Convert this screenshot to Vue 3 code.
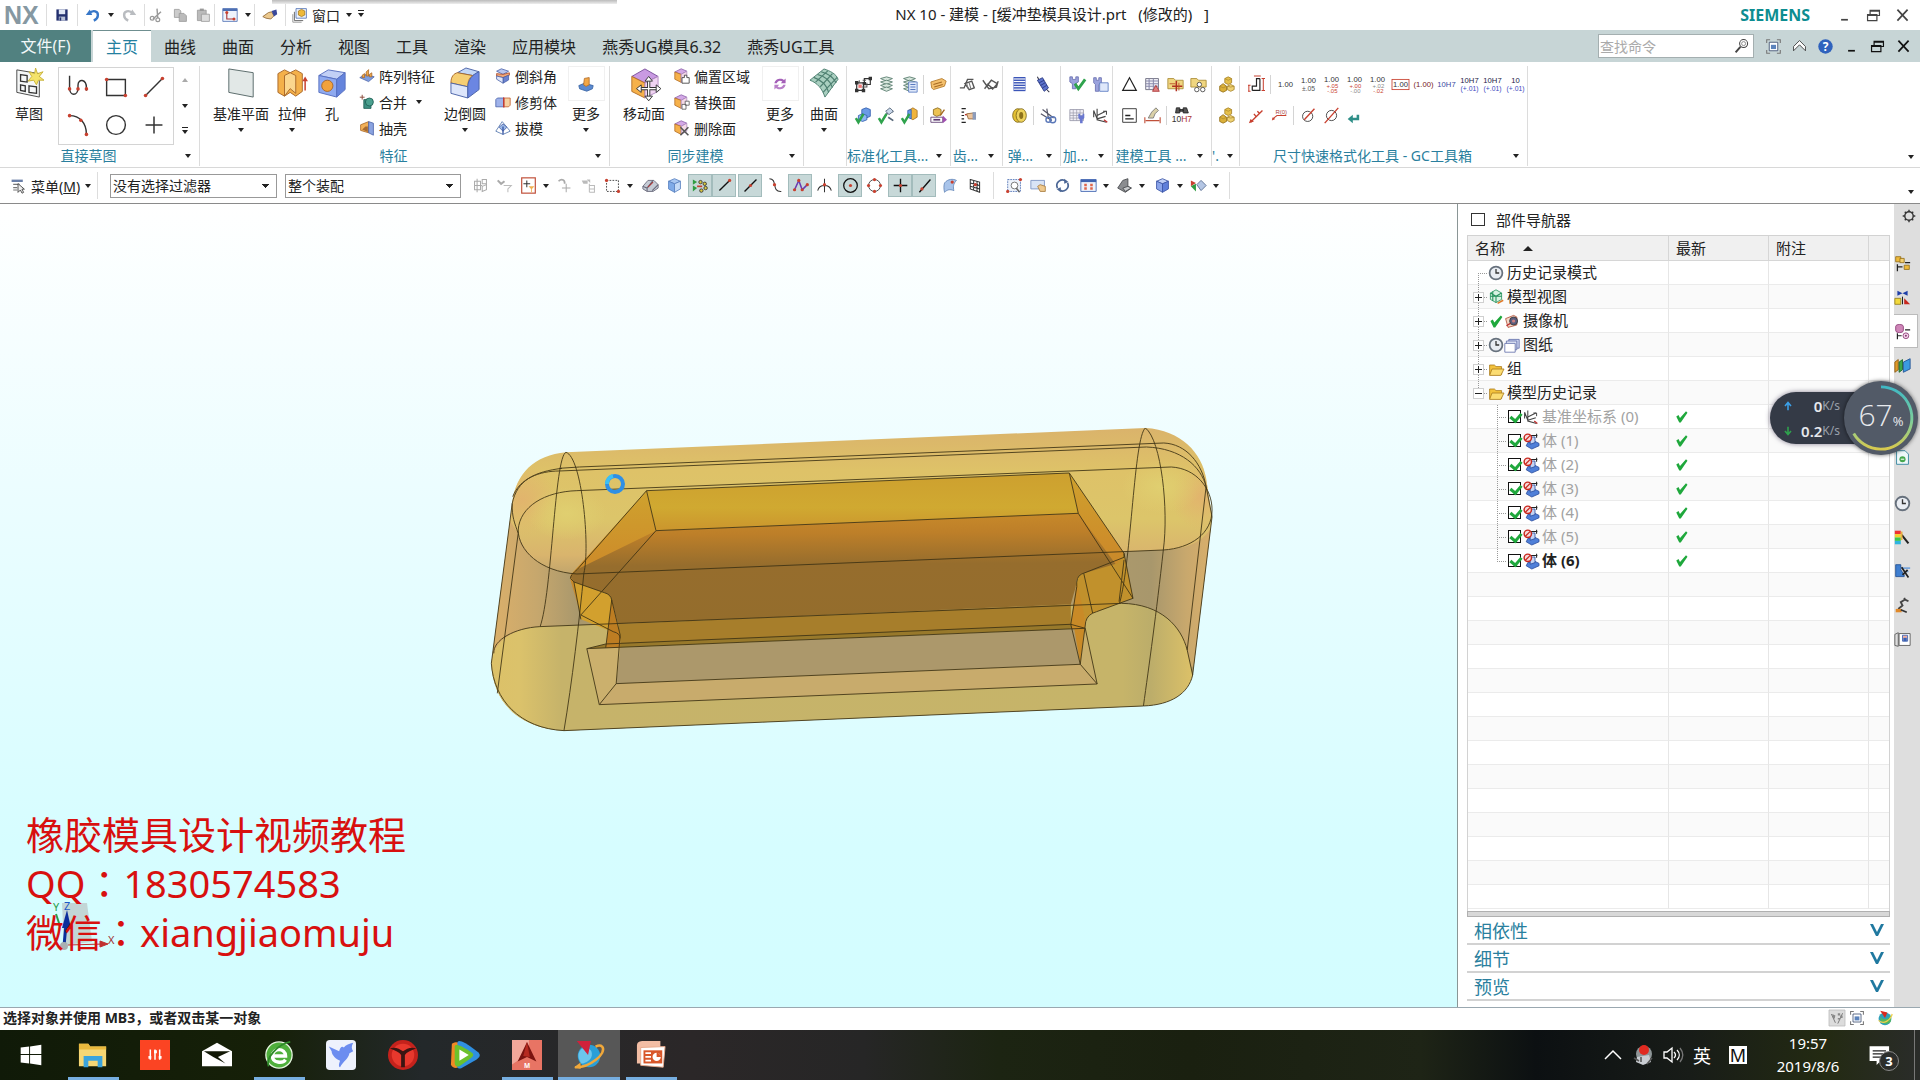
<template>
  <div class="app">
    <!-- 标题栏 -->
    <header class="title-bar">
      <div class="top-shade"></div>
      <div class="quick">
        <span class="nx-logo">NX</span>
        <i class="q-sep"></i>
        <button class="q-btn" aria-label="保存"><Icon name="save" /></button>
        <i class="q-sep"></i>
        <button class="q-btn" aria-label="撤消"><Icon name="undo" /></button>
        <i class="caret"></i>
        <button class="q-btn" aria-label="重做"><Icon name="redo" /></button>
        <i class="q-sep"></i>
        <button class="q-btn tight" aria-label="剪切"><Icon name="cut" /></button>
        <button class="q-btn tight" aria-label="复制"><Icon name="copy" /></button>
        <button class="q-btn tight" aria-label="粘贴"><Icon name="paste" /></button>
        <i class="q-sep"></i>
        <button class="q-btn" aria-label="视图窗口"><Icon name="wcs" /></button>
        <i class="caret"></i>
        <i class="q-sep gap"></i>
        <button class="q-btn" aria-label="触控"><Icon name="hand" /></button>
        <i class="q-sep"></i>
        <button class="q-win"><Icon name="window" /><span>窗口</span></button>
        <i class="caret"></i>
        <i class="caret lined"></i>
      </div>
      <div class="title-text">NX 10 - 建模 - [缓冲垫模具设计.prt&nbsp;&nbsp; (修改的)&nbsp;&nbsp; ]</div>
      <div class="title-right">
        <span class="siemens">SIEMENS</span>
        <button v-for="n in ['min', 'restore', 'close']" :key="n" class="win-btn" :aria-label="n"><Icon :name="n" /></button>
      </div>
    </header>

    <!-- 选项卡 -->
    <nav class="tab-bar">
      <button class="file-tab">文件(F)</button>
      <button v-for="(t, i) in tabs" :key="t" class="tab" :class="{ active: i === 0 }">{{ t }}</button>
      <div class="tab-right">
        <label class="search">
          <input type="text" placeholder="查找命令" aria-label="查找命令" />
          <Icon name="search" />
        </label>
        <button class="tb-btn" aria-label="全屏"><Icon name="full" /></button>
        <button class="tb-btn" aria-label="最小化功能区"><Icon name="collapse" /></button>
        <button class="tb-btn" aria-label="帮助"><Icon name="help" /></button>
        <button v-for="n in ['min', 'restore', 'close']" :key="n" class="tb-btn dark" :aria-label="n"><Icon :name="n" /></button>
      </div>
    </nav>

    <!-- 功能区 -->
    <section class="ribbon">
      <div class="group g-sketch">
        <div class="group-body">
          <button class="big w-sketch"><Icon name="sketch" big /><span>草图</span></button>
          <div class="gallery">
            <button v-for="n in gallery" :key="n" :aria-label="n"><Icon :name="n" big /></button>
          </div>
          <div class="gallery-nav"><i class="caret up"></i><i class="caret"></i><i class="caret lined"></i></div>
        </div>
        <div class="group-foot"><span>直接草图</span><i class="caret"></i></div>
      </div>

      <div class="group g-feature">
        <div class="group-body">
          <button class="big w-plane"><Icon name="plane" big /><span>基准平面</span><i class="caret"></i></button>
          <button class="big"><Icon name="extrude" big /><span>拉伸</span><i class="caret"></i></button>
          <button class="big"><Icon name="hole" big /><span>孔</span></button>
          <div class="list w-list1">
            <button><Icon name="pattern" /><span>阵列特征</span></button>
            <button><Icon name="unite" /><span>合并</span><i class="caret"></i></button>
            <button><Icon name="shell" /><span>抽壳</span></button>
          </div>
          <button class="big w-blend"><Icon name="blend" big /><span>边倒圆</span><i class="caret"></i></button>
          <div class="list w-list2">
            <button><Icon name="chamfer" /><span>倒斜角</span></button>
            <button><Icon name="trim" /><span>修剪体</span></button>
            <button><Icon name="draft" /><span>拔模</span></button>
          </div>
          <button class="big more"><span class="more-box"><Icon name="pad" /></span><span>更多</span><i class="caret"></i></button>
        </div>
        <div class="group-foot"><span>特征</span><i class="caret"></i></div>
      </div>

      <div class="group g-sync">
        <div class="group-body">
          <button class="big w-blend"><Icon name="moveface" big /><span>移动面</span></button>
          <div class="list w-list3">
            <button><Icon name="offset" /><span>偏置区域</span></button>
            <button><Icon name="replace" /><span>替换面</span></button>
            <button><Icon name="delface" /><span>删除面</span></button>
          </div>
          <button class="big more"><span class="more-box"><Icon name="cycle" /></span><span>更多</span><i class="caret"></i></button>
        </div>
        <div class="group-foot"><span>同步建模</span><i class="caret"></i></div>
      </div>

      <div class="group g-surface">
        <div class="group-body">
          <button class="big"><Icon name="surface" big /><span>曲面</span><i class="caret"></i></button>
        </div>
      </div>

      <div v-for="g in gcGroups" :key="g.label" class="group" :class="g.cls">
        <div class="group-body gc">
          <div v-for="(row, r) in g.rows" :key="r" class="gc-row">
            <template v-for="(n, i) in row" :key="i">
              <i v-if="n === '|'" class="gc-sep"></i>
              <button v-else :aria-label="n"><Icon :name="n" /></button>
            </template>
          </div>
        </div>
        <div class="group-foot"><span>{{ g.label }}</span><i class="caret"></i></div>
      </div>
      <div class="ribbon-end"><i class="caret"></i></div>
    </section>

    <!-- 选择条 -->
    <section class="select-bar">
      <button class="menu-btn"><Icon name="menu" /><span>菜单(<u>M</u>)</span><i class="caret"></i></button>
      <i class="bar-sep"></i>
      <select class="combo c1" aria-label="类型过滤器"><option>没有选择过滤器</option></select>
      <select class="combo c2" aria-label="选择范围"><option>整个装配</option></select>
      <div class="bar-icons">
        <template v-for="(n, i) in barIcons" :key="i">
          <i v-if="n === '|'" class="bar-sep wide"></i>
          <i v-else-if="n === ' '" class="bar-gap"></i>
          <i v-else-if="n === 'v'" class="caret"></i>
          <button v-else :class="{ on: n.endsWith('*') }" :aria-label="n"><Icon :name="n.replace('*', '')" /></button>
        </template>
      </div>
      <i class="caret bar-end"></i>
    </section>

    <!-- 工作区 -->
    <main class="work">
      <div class="viewport">
        <svg class="scene" viewBox="0 0 1457 803" preserveAspectRatio="xMinYMin meet">
          <defs>
            <linearGradient id="body" x1="0" y1="0" x2="0" y2="1">
              <stop offset="0" stop-color="#dab36b" /><stop offset=".14" stop-color="#dec268" />
              <stop offset=".3" stop-color="#dcc56a" /><stop offset=".42" stop-color="#d9b46d" />
              <stop offset=".52" stop-color="#b39c6c" /><stop offset="1" stop-color="#ad9a6b" />
            </linearGradient>
            <linearGradient id="endL" x1="0" y1="0" x2="1" y2="0">
              <stop offset="0" stop-color="#dcb06a" /><stop offset=".4" stop-color="#c6a76d" /><stop offset=".75" stop-color="#a8976c" /><stop offset="1" stop-color="#ab996c" />
            </linearGradient>
            <linearGradient id="endR" x1="1" y1="0" x2="0" y2="0">
              <stop offset="0" stop-color="#dcb06a" /><stop offset=".3" stop-color="#c8a86d" /><stop offset=".65" stop-color="#a8976c" /><stop offset="1" stop-color="#ab996c" />
            </linearGradient>
            <linearGradient id="bottom" x1="0" y1="0" x2="1" y2="0">
              <stop offset="0" stop-color="#dcc168" /><stop offset=".04" stop-color="#dbc26b" /><stop offset=".1" stop-color="#c6b36a" />
              <stop offset=".9" stop-color="#c6b469" /><stop offset=".94" stop-color="#bcad6a" /><stop offset="1" stop-color="#dcc168" />
            </linearGradient>
            <linearGradient id="top" x1="0" y1="0" x2="0" y2="1">
              <stop offset="0" stop-color="#cda02f" /><stop offset=".6" stop-color="#d0a931" /><stop offset="1" stop-color="#cb952d" />
            </linearGradient>
            <linearGradient id="mid" x1="0" y1="0" x2="0.04" y2="1">
              <stop offset="0" stop-color="#c98b2a" /><stop offset=".2" stop-color="#bd7f29" /><stop offset=".48" stop-color="#966d2d" /><stop offset="1" stop-color="#946d2c" />
            </linearGradient>
            <linearGradient id="orange" x1="0" y1="0" x2="0" y2="1">
              <stop offset="0" stop-color="#cfa22e" /><stop offset=".55" stop-color="#cd8d2a" /><stop offset="1" stop-color="#c0842a" />
            </linearGradient>
            <radialGradient id="hot"><stop offset="0" stop-color="#e3b06e" stop-opacity=".8" /><stop offset="1" stop-color="#e3b06e" stop-opacity="0" /></radialGradient>
            <radialGradient id="lemon"><stop offset="0" stop-color="#e0cf70" /><stop offset="1" stop-color="#e0cf70" stop-opacity="0" /></radialGradient>
            <clipPath id="outer"><path :d="outline" /></clipPath>
          </defs>
          <g transform="translate(460 196) scale(.4974 .3333)">
            <path :d="outline" fill="url(#body)" />
            <g clip-path="url(#outer)">
              <path d="M90 340L117 400C130 470 170 515 235 522H300V760H60Z" fill="url(#endL)" />
              <path d="M1520 350C1505 420 1470 445 1414 450L1320 455V800H1520Z" fill="url(#endR)" />
              <ellipse cx="125" cy="300" rx="70" ry="110" fill="url(#hot)" />
              <ellipse cx="215" cy="340" rx="80" ry="80" fill="url(#lemon)" />
              <ellipse cx="1490" cy="290" rx="60" ry="100" fill="url(#hot)" />
              <ellipse cx="1410" cy="260" rx="80" ry="80" fill="url(#lemon)" />
            </g>
            <path d="M160 680L1330 610C1410 612 1450 680 1462 750L1473 825C1462 890 1420 915 1374 918L209 992C120 985 66 910 63 790C66 720 110 684 160 680Z" fill="url(#bottom)" />
            <path d="M375 272L1225 219L1243 340L394 392Z" fill="url(#top)" />
            <path d="M375 272L394 392L243 645L222 540V525Z" fill="url(#orange)" />
            <path d="M1225 219L1335 460L1353 595L1243 340Z" fill="url(#orange)" />
            <path d="M394 392L1243 340L1322 500L1250 522Q1238 530 1238 560L1228 613L318 672L305 600Q302 585 290 578L229 546L222 530L236 508Z" fill="url(#mid)" />
            <path d="M318 672L1228 613L1228 675L323 735Z" fill="#a77e2b" />
            <path d="M255 746L293 732L1228 673L1257 685Z" fill="#98792b" />
            <path d="M229 546L290 578Q303 583 305 600L322 705L243 658Z" fill="#d2a02e" />
            <path d="M305 600L322 705V743H293Z" fill="#bd7d22" />
            <path d="M1322 490L1335 460L1353 595L1280 635Q1262 642 1258 665L1238 560Q1240 530 1250 522Z" fill="#c1912c" />
            <path d="M1240 545L1258 665L1247 793L1228 673Z" fill="#c98a27" />
            <path d="M322 743L1235 687L1247 793L314 851Z" fill="#ac986b" />
            <path d="M255 746L322 743L314 851L280 914Z" fill="#cbb06d" />
            <path d="M314 851L1247 793L1281 852L280 914Z" fill="#c8ab6c" />
            <path d="M1257 685L1281 852L1247 793Z" fill="#c7ae6b" />
            <g class="edges">
              <path d="M213 157C190 170 185 580 161 680M213 157C245 170 262 440 249 520C240 660 225 850 209 992" />
              <path d="M1378 84C1355 110 1350 480 1326 610M1378 84C1410 120 1425 330 1414 450C1400 640 1385 800 1374 918" />
              <path d="M200 205L240 201L1415 129C1460 132 1492 190 1500 260L1512 350L1473 825M200 213L1380 141C1450 145 1490 200 1500 260" />
              <path d="M105 310C115 240 150 215 205 205M106 290C120 235 160 213 200 213" />
              <path d="M235 272L1430 201C1480 205 1512 265 1512 330C1512 400 1470 445 1414 450L235 522C160 515 117 450 117 390C120 320 170 275 235 272Z" />
              <path d="M105 310L63 790C68 900 120 985 209 992L1374 918C1430 915 1465 880 1473 825M105 310C104 350 110 370 117 400L75 880M1500 260L1462 750" />
              <path d="M160 680L1330 610C1410 612 1450 680 1462 750L1473 825M160 680C110 684 66 720 68 760" />
              <path d="M375 272L394 392L1243 340L1225 219L1335 460L1353 595L1280 635Q1262 642 1258 665L1247 793L1281 852L280 914L255 746L293 732L1228 673L1257 685L255 746M375 272L236 508Q222 525 222 535L229 546L290 578Q303 583 305 600L322 705L314 851L280 914M394 392L243 645L308 695Q322 700 322 715" />
              <path d="M375 272L1225 219M1335 460V472L1250 522Q1238 530 1240 560L1228 673L1247 793L314 851M1243 340L1353 595M1257 685L1281 852M229 546L243 658M305 600L293 743M1254 520L1272 640M1335 480L1325 605" />
            </g>
          </g>
          <circle cx="615" cy="280" r="8" fill="none" stroke="#2f8fe4" stroke-width="4" />
          <path d="M607 280A8 8 0 0 1 613 272" fill="none" stroke="#3cc0f4" stroke-width="4" />
          <!-- 坐标轴 -->
          <g>
            <path d="M62 699H87L92 738L64 741Z" fill="#b9c4c4" opacity=".7" />
            <path d="M68 741L104 740M100 737L108 740L100 743Z" stroke="#c03030" fill="#c03030" />
            <path d="M64 742L66 720" stroke="#0b2f9c" stroke-width="3" /><path d="M62 724L67 706L71 724Z" fill="#0b2f9c" />
            <path d="M60 722L56 710" stroke="#2b9c4a" stroke-width="2" />
            <circle cx="64" cy="742" r="4" fill="#a9b0b2" />
            <text x="53" y="707" fill="#2b9c4a">Y</text><text x="64" y="706" fill="#1d59c8">Z</text><text x="108" y="740" fill="#a03030">X</text>
          </g>
        </svg>
        <div class="watermark">
          <div>橡胶模具设计视频教程</div>
          <div>QQ<span class="colon">：</span>1830574583</div>
          <div>微信<span class="colon">：</span>xiangjiaomuju</div>
        </div>
      </div>

      <aside class="navigator">
        <h2 class="nav-title"><i class="nav-box"></i>部件导航器</h2>
        <div class="tree-wrap">
          <table class="tree">
            <colgroup><col class="col-name" /><col class="col-mid" /><col class="col-mid" /><col /></colgroup>
            <thead>
              <tr><th>名称<i class="caret up sort"></i></th><th>最新</th><th>附注</th><th></th></tr>
            </thead>
            <tbody>
              <tr v-for="(row, i) in treeRows" :key="i">
                <td>
                  <div v-if="row.text" class="node" :class="{ child: row.child, dim: row.dim, bold: row.bold }">
                    <svg class="branch" width="16" height="24" viewBox="0 0 16 24">
                      <path :d="branchPath(row)" stroke="#999" stroke-dasharray="1 1" fill="none" />
                      <template v-if="row.box">
                        <rect x="1.5" y="7.5" width="10" height="10" fill="#fff" stroke="#d0d0d0" />
                        <path :d="row.box === '+' ? 'M3 12.5H10M6.5 9V16' : 'M3 12.5H10'" stroke="#222" />
                      </template>
                    </svg>
                    <input v-if="row.child" type="checkbox" checked :aria-label="row.text" />
                    <Icon v-for="n in row.icons" :key="n" :name="n" />
                    <span>{{ row.text }}</span>
                  </div>
                </td>
                <td><Icon v-if="row.child" name="tick" class="tick" /></td>
                <td></td>
                <td></td>
              </tr>
            </tbody>
          </table>
          <div class="splitter"></div>
        </div>
        <button v-for="s in sections" :key="s" class="section-bar">
          <span>{{ s }}</span>
          <svg width="16" height="14" viewBox="0 0 16 14"><path d="M1 1H4L8 9L12 1H15L9 13H7Z" fill="#2079a0" /></svg>
        </button>
      </aside>

      <div class="resource-bar">
        <button class="gear" aria-label="设置"><Icon name="gear" /></button>
        <button v-for="r in resources" :key="r" :class="[r, { active: r === 'partnav' }]" :aria-label="r"><Icon :name="r" /></button>
      </div>

      <!-- 网速悬浮窗 -->
      <div class="speed">
        <div class="speed-pill">
          <div><Icon name="up" /><b>0</b><small>K/s</small></div>
          <div><Icon name="down" /><b>0.2</b><small>K/s</small></div>
        </div>
        <div class="speed-ball">
          <svg viewBox="0 0 76 76">
            <defs><linearGradient id="arc" x1="0" y1="0" x2="0" y2="1"><stop offset="0" stop-color="#3fb8c4" /><stop offset=".55" stop-color="#7fcf9a" /><stop offset="1" stop-color="#d8c94e" /></linearGradient></defs>
            <path d="M38 6A32 32 0 1 1 10 54" fill="none" stroke="url(#arc)" stroke-width="3" />
          </svg>
          <span class="pct">67<small>%</small></span>
        </div>
      </div>
    </main>

    <footer class="status">
      <span>选择对象并使用 MB3，或者双击某一对象</span>
      <div class="status-icons"><Icon name="flag" /><Icon name="full" /><Icon name="nxball" /></div>
    </footer>

    <!-- 任务栏 -->
    <div class="taskbar">
      <button v-for="t in tasks" :key="t.icon" class="task" :class="t.state" :aria-label="t.icon"><Icon :name="t.icon" big /></button>
      <div class="tray">
        <Icon name="chev" /><Icon name="qq" /><Icon name="volume" />
        <span class="ime">英</span>
        <span class="ime-m">M</span>
        <div class="clock"><span>19:57</span><span>2019/8/6</span></div>
        <div class="notice"><Icon name="note" big /><span>3</span></div>
        <i class="desk"></i>
      </div>
    </div>
  </div>
</template>

<script setup>
import { h } from 'vue';

const R = '#c8402f';
const dot = (x, y) => `<circle cx="${x}" cy="${y}" r="1.9" fill="${R}"/>`;
const ln = (d, c = '#333', w = 1.2) => `<path d="${d}" fill="none" stroke="${c}" stroke-width="${w}"/>`;
const fl = (d, c, s = 'none') => `<path d="${d}" fill="${c}" stroke="${s}"/>`;
const tx = (t, x, y, s, c = '#333') => `<text x="${x}" y="${y}" font-size="${s}" fill="${c}" text-anchor="middle" font-family="Liberation Sans, sans-serif">${t}</text>`;
const cube = (a, b, c, s) => fl('M10 2L17 5L10 8L3 5Z', a, s) + fl('M3 5L10 8V18L3 14Z', b, s) + fl('M17 5L10 8V18L17 14Z', c, s);
const smallCube = fl('M1 5L9 1L16 4L9 8Z', '#d3a8e6', '#8a5fa8') + fl('M1 5L9 8V18L1 14Z', '#f6b14a', '#b4702a') + fl('M16 4L9 8V18L16 14Z', '#f3d9e6', '#b08ac0');
const cubes = fl('M8 3L12 1L16 3V8L12 10L8 8Z', '#e6c04a', '#a8842a') + fl('M2 12L6 9L10 12V17L6 19L2 17Z', '#dbb038', '#96731e') + fl('M11 12L15 10L19 12V16L15 18L11 16Z', '#efd272', '#a8842a') + ln('M8 3L12 5L16 3M2 12L6 14L10 12M11 12L15 13L19 12', '#a8842a', 0.8);
const stack = [3, 7, 11, 15].map((y) => fl(`M3 ${y}L10 ${y - 2}L17 ${y}L10 ${y + 3}Z`, '#d7e6dd', '#557a6c')).join('');
const block = fl('M8 3L13 1L18 3V11L13 13L8 11Z', '#6b9be6', '#3460b0') + fl('M4 10L9 8L14 10V15L9 17L4 15Z', '#8db8f2', '#3460b0');
const greenTick = (x, y) => `<path d="M${x} ${y}L${x + 3} ${y + 5}L${x + 9} ${y - 5}" fill="none" stroke="#2fa34d" stroke-width="3"/>`;
const dim = (sub, c1, c2) => tx('1.00', 10, 7, 9) + tx('+.' + sub, 11, 14, 7, c1) + tx('-.' + sub, 11, 20, 7, c2);
const fit = (t, s) => tx(t, 10, 8, 9, '#224') + tx(s, 10, 18, 8, '#3a49c0');
const clock = '<circle cx="10" cy="10" r="8" fill="#e9edf3" stroke="#67717d" stroke-width="2.2"/>' + ln('M10 5V10H14', '#333', 1.6);

const icons = {
  save: fl('M3 3H17V17H3Z', '#23306f') + fl('M6 3H14V9H6Z', '#dfe6f5') + fl('M6 12H14V17H6Z', '#b9c2d8') + fl('M7 13H9V17H7Z', '#23306f'),
  undo: ln('M5 8C10 3 17 5 16 11C16 14 13 16 11 17', '#3777c8', 3) + fl('M1 10L6 3L9 10Z', '#3777c8'),
  redo: ln('M15 8C10 3 3 5 4 11C4 14 7 16 9 17', '#b9bcc0', 3) + fl('M19 10L14 3L11 10Z', '#b9bcc0'),
  cut: ln('M5 15L15 6M10 2L11 14', '#999', 1.8) + '<circle cx="4" cy="14" r="2.4" fill="none" stroke="#999" stroke-width="1.5"/><circle cx="11" cy="16" r="2.4" fill="none" stroke="#999" stroke-width="1.5"/>',
  copy: fl('M3 3H9L11 5V13H3Z', '#ccc', '#999') + fl('M9 8H15L18 11V18H9Z', '#bbb', '#999'),
  paste: fl('M3 4H14V17H3Z', '#bbb', '#999') + fl('M6 2H11V5H6Z', '#999') + fl('M8 9H18V18H8Z', '#ddd', '#999'),
  wcs: fl('M1 2H19V18H1Z', '#eef3fc', '#4d6fb3') + fl('M1 2H19V5H1Z', '#4d6fb3') + ln('M6 7V15H15', '#a33', 1.4) + dot(6, 7) + dot(15, 15),
  hand: fl('M1 12L8 7L12 6L15 11L11 15L5 14Z', '#ecc98e', '#8a6230') + fl('M12 5L18 3L19 9L15 12Z', '#39489a'),
  window: fl('M5 2H18V14H5Z', '#eef3fc', '#4d6fb3') + fl('M8 5L12 3L16 5V10L12 12L8 10Z', '#efb938', '#a47a1d') + ln('M3 6V17H14', '#666', 1.2) + ln('M1 9V19H12', '#888', 1),
  min: fl('M6 14H14V16H6Z', 'currentColor'),
  restore: ln('M6 9V4H17V10H14M3 9H14V16H3ZM3 10H14M6 5H17', 'currentColor', 1.4),
  close: ln('M4 3L16 16M16 3L4 16', 'currentColor', 2),
  search: '<circle cx="12" cy="7" r="5" fill="none" stroke="#444" stroke-width="1.3"/><circle cx="12" cy="7" r="2.5" fill="none" stroke="#777"/>' + ln('M8 11L2 18', '#444', 2.4),
  full: ln('M2 6V2H6M14 2H18V6M18 14V18H14M6 18H2V14', '#777', 1.3) + fl('M5 5H15V15H5Z', '#fff', '#3b4d70') + fl('M7 8H13V13H7Z', '#5b83bc'),
  collapse: fl('M3 10L10 3L17 10V15L10 8L3 15Z', '#fff', '#333'),
  help: '<circle cx="10" cy="10" r="8.5" fill="#2f62bd"/><text x="10" y="15" font-size="14" font-weight="700" fill="#fff" text-anchor="middle">?</text>',
  pattern: fl('M1 12L9 8L19 11L12 17Z', '#7e9ee0', '#4a62a8') + fl('M4 9L7 7V12H4Z', '#f0a848', '#a8682a') + fl('M9 5L12 2V10H9Z', '#f0a848', '#a8682a') + fl('M13 8L16 6V11H13Z', '#f0a848', '#a8682a'),
  unite: fl('M6 7H15V18H6Z', '#3e9183', '#1d5c52') + '<circle cx="13" cy="10" r="5" fill="#4ba08f" stroke="#1d5c52"/>' + ln('M4 1V7M1 4H7', '#8a4a3a'),
  shell: fl('M2 6L12 2V16L2 13Z', '#f2b057', '#a8682a') + fl('M12 2L18 4V19L12 16Z', '#8aa3e0', '#4a62a8') + fl('M4 12L8 8H11V15Z', '#a66a30'),
  chamfer: fl('M2 4L8 1L17 4L10 8Z', '#b9c6ee', '#4a62a8') + fl('M2 7L10 8L18 6V9L10 12L2 10Z', '#f0a878', '#a8482a') + fl('M10 12L17 9V15L10 19Z', '#6b82d0', '#4a62a8') + fl('M2 10L10 12V19L2 14Z', '#dfe5f8', '#4a62a8'),
  trim: fl('M3 5H11V16H1V7Z', '#9fb2ea', '#4a62a8') + fl('M12 5H19V14L17 16H11V6Z', '#f6d0a0', '#c06030') + ln('M11 4V17', '#c03030', 1.6),
  draft: ln('M1 14L9 2L19 14L10 18Z', '#6a88b8') + fl('M5 9L10 5L15 9L10 14Z', '#9dbbe8', '#4a62a8') + ln('M10 8V18', '#3050a0', 1.6),
  pad: fl('M1 12L8 9L19 12L18 16L11 19L2 16Z', '#5b8ad0', '#3460a0') + fl('M8 3L14 2V11L10 13L7 11Z', '#f2a746', '#b06a26'),
  offset: smallCube + fl('M10 12H13V9H16V12H19V19H10Z', '#fff', '#333'),
  replace: smallCube + fl('M10 13H15V19H10ZM14 9H19V14H14Z', '#fff', '#555'),
  delface: smallCube + ln('M8 9L18 19M18 9L8 19', '#555', 2),
  cycle: fl('M3 9C4 3 12 2 15 5L17 3V9H11L13 7C10 5 7 6 6 9Z', '#a45fb8') + fl('M17 11C16 17 8 18 5 15L3 17V11H9L7 13C10 15 13 14 14 11Z', '#b87fc8'),
  std1: ln('M2 8H10V17H2ZM11 3H18V10H11Z', '#333', 1.4) + ln('M9 5H13M5 8V5M8 13H14V8', '#555') + fl('M4 10H8V14H4Z', '#e77') + fl('M0 15H4V19H0ZM8 15H12V19H8ZM16 1H20V5H16ZM9 7H13V11H9ZM0 6H4V10H0Z', '#333'),
  stack,
  stack2: stack + fl('M9 7H19V19H9Z', '#dfe8fa', '#5a7ac0') + ln('M11 10H17M11 13H17M11 16H17', '#5a7ac0'),
  tag: fl('M1 7L14 3L19 6L17 12L4 16L2 14Z', '#f3bf6c', '#b27a2c') + ln('M4 10L14 7M5 13L15 10', '#a66a24'),
  chk1: block + greenTick(1, 13),
  chk2: ln('M6 14L14 3L18 6', '#678', 2) + fl('M9 5L14 1L18 5L13 9Z', '#c9d7ea', '#567') + ln('M12 12L18 16', '#567', 2) + greenTick(1, 13),
  chk3: fl('M9 4L14 1L19 4V12L14 15L9 12Z', '#f0b43c', '#a8762a') + fl('M8 4L12 3V14L8 12Z', '#6b9be6', '#3460b0') + greenTick(1, 13),
  edit: fl('M4 3L9 1L13 3V9L8 11L4 9Z', '#ecc254', '#8a6a20') + fl('M1 12H15V18H1Z', '#fff', '#5c3a70') + ln('M4 15H12', '#5c3a70', 2) + fl('M15 10L20 15L15 19Z', '#a050b0') + ln('M12 10L17 3', '#a66a24', 1.6),
  gear1: ln('M1 14H6L10 4H17M7 9L15 6L18 14L12 16Z', '#555', 1.6) + ln('M9 9L11 15M12 8L14 15', '#777'),
  gear2: ln('M1 5L8 15L17 13L19 6M3 15L11 5L18 9L12 16M6 9L13 15', '#555', 1.6),
  finger: ln('M3 2H8M3 6H6M3 10H6M3 14H6M3 18H8', '#222', 1.4) + ln('M7 9H12', '#c03030', 1.6) + fl('M9 8L17 7V14H11Z', '#ecc39a', '#96683a') + fl('M16 6H20V15H16Z', '#8d9cba'),
  spring1: [2, 5, 8, 11, 14, 17].map((y) => ln(`M3 ${y}H17`, '#3b55b8', 1.7)).join('') + ln('M3 2V17M17 2V17', '#8b9ad8', 0.8),
  spring2: ln('M4 1L6 5M14 15L18 19', '#334') + fl('M4 5L10 2L17 14L12 18Z', '#5c72cc', '#26357e') + ln('M6 8L12 5M8 11L13 8M10 14L15 11', '#26357e', 1),
  coil: '<ellipse cx="8" cy="10" rx="6" ry="8" fill="#e3c034" stroke="#80681a"/><ellipse cx="12" cy="10" rx="6" ry="8" fill="#edd25c" stroke="#80681a"/><ellipse cx="12" cy="10" rx="2.4" ry="4" fill="#8d721b"/>',
  snip: ln('M3 3L16 13M1 8L14 16M8 2L10 14', '#556', 1.4) + '<circle cx="15" cy="15" r="3.5" fill="none" stroke="#5a77b8" stroke-width="1.6"/><circle cx="10" cy="15" r="3" fill="none" stroke="#5a77b8" stroke-width="1.6"/>',
  vcheck: fl('M1 1H4V4H8V1H11V7L8 9V15H4V9L1 7Z', '#9aa2dd', '#6a70b0') + '<path d="M7 9L11 15L19 4" fill="none" stroke="#2fa34d" stroke-width="3.4"/>',
  vcopy: fl('M2 2H5V5H8V2H11V8L8 10V18H4V10L2 8Z', '#9aa2dd', '#6a70b0') + fl('M9 8H19V18H9Z', '#dfe8fa', '#5a7ac0'),
  grid: fl('M1 3H17V16H1Z', '#f0eef6', '#99a') + ln('M1 7H17M1 10H17M1 13H17M5 3V16M9 3V16M13 3V16', '#99a', 0.8) + fl('M11 8H13V10H16V8H18V13L16 15V19H13V15L11 13Z', '#6a78d0'),
  csys: ln('M6 2V15L17 18M6 10L16 5M2 4L6 14M6 14L16 11M2 4V12', '#444', 1.3) + ln('M13 5H17V9', '#444') + ln('M14 15L18 18', '#c03030', 1.6),
  tri: ln('M10 2L18 17H2Z', '#222', 1.4),
  table: fl('M2 3H17V16H2Z', '#f2f2f8', '#667') + ln('M2 6H17M2 9H17M2 12H17M6 3V16M11 3V16', '#88a') + fl('M14 11L18 18H10Z', '#e08080', '#a33'),
  fold1: fl('M1 3H8L10 5H19V15H1Z', '#f0d680', '#a88a34') + ln('M11 6V18M6 12H18', '#b03020', 1.8) + ln('M3 9H10M14 8V17', '#c06030'),
  fold2: fl('M1 3H8L10 5H19V13H1Z', '#f0d680', '#a88a34') + '<circle cx="11" cy="10" r="2.6" fill="#fff" stroke="#444"/><circle cx="8" cy="16" r="2.6" fill="#fff" stroke="#444"/><circle cx="15" cy="16" r="2.6" fill="#fff" stroke="#444"/>',
  note2: fl('M2 2H18V18H2Z', '#fff', '#222') + ln('M5 10H11M5 14H15', '#222', 1.5),
  brush: ln('M1 12V19M19 12V19M2 16H18', '#c0503a', 1.3) + fl('M9 6L14 1L17 4L13 8L11 13L5 13Z', '#d9d0a8', '#777'),
  find: fl('M4 1H8V7H3ZM12 1H16L18 7H12ZM8 3H12V5H8Z', '#555', '#222') + tx('10', 4, 18, 10) + tx('H7', 16, 18, 10, '#a33'),
  cubes,
  dimall: ln('M5 17H14V3M5 17V12H10V3H14', '#222', 1.4) + ln('M1 11V18M0 11H3M0 18H3M18 3V17M16 3H20M16 17H20M7 0H15', R),
  d0: tx('1.00', 10, 13, 9),
  d1: tx('1.00', 10, 8, 9) + tx('±.05', 10, 18, 8, '#555'),
  d2: dim('05', R, R),
  d3: dim('00', R, '#888'),
  d4: dim('02', '#888', R),
  d5: `<rect x="0" y="4" width="20" height="12" fill="#fff" stroke="${R}"/>` + tx('1.00', 10, 13, 9),
  d6: tx('(1.00)', 10, 13, 9, '#722'),
  d7: tx('10H7', 10, 13, 9, '#3a49a0'),
  d8: fit('10H7', '(+.01)'),
  d9: fit('10H7', '(+.01)'),
  d10: fit('10', '(+.01)'),
  rad: ln('M3 18L17 4M7 8L10 12M11 5L14 8', R, 1.6) + fl('M1 19L3 14L7 17Z', R),
  rad2: ln('M2 14L7 10H18', R) + fl('M1 16L2 12L5 14Z', R) + tx('R(0)', 12, 8, 7, '#a44'),
  dia1: '<circle cx="9" cy="11" r="6" fill="none" stroke="#333"/>' + ln('M5 15L17 2', R, 1.6),
  dia2: '<circle cx="10" cy="10" r="6" fill="none" stroke="#333"/>' + ln('M2 19L18 1', R, 1.6),
  ret: ln('M14 9V14H7', '#2f8f88', 3) + fl('M2 14L8 9V19Z', '#2f8f88'),
  menu: fl('M2 2H16V5H2Z', '#6a7fa8') + ln('M4 8H12M4 12H9M4 15H9', '#777', 1.4) + fl('M10 7V18L13 15L15 19L17 18L15 14H18Z', '#eee', '#333'),
  s1: ln('M3 5H10V15H3ZM6 2V18M3 10H12M12 3H17V8H12ZM12 11L17 9V15L12 17Z', '#aaa'),
  s2: ln('M2 4L6 8L10 5', '#aaa', 2.4) + ln('M9 10H18L14 14V18', '#bbb'),
  s3: '<rect x="2" y="1" width="16" height="18" fill="#fff" stroke="#c0503a" stroke-width="1.4"/>' + ln('M8 4V12M4 8H12', '#333') + fl('M10 11H17L14 14V18H13V14Z', '#f0b050'),
  s4: ln('M3 5C7 1 11 4 10 8', '#aaa', 2) + ln('M12 8V18M7 13H17', '#aaa'),
  s5: fl('M2 4H9V8H4ZM8 3H12V7Z', '#bbb') + ln('M11 8V18M11 10H17V18H11M11 14H17', '#bbb'),
  s6: '<rect x="3" y="4" width="14" height="13" fill="none" stroke="#333" stroke-dasharray="2 1.5"/>' + dot(3, 4) + dot(17, 17),
  s7: fl('M1 11L7 4H14L19 9V13L13 17H6L1 14Z', '#c6ccd6', '#667') + ln('M1 11L6 13L13 4M6 13V17M12 16L19 9', '#667') + ln('M7 12L13 6', '#a33', 1.2),
  s8: cube('#a9c8f2', '#7fabe8', '#c5dbf7', '#5a82c0'),
  s9: fl('M1 3L6 6L1 9ZM1 10L6 13L1 17Z', '#2f9c42') + '<circle cx="10" cy="6" r="2" fill="#d8c640" stroke="#333"/><circle cx="15" cy="8" r="2" fill="#d8c640" stroke="#333"/><circle cx="16" cy="13" r="2" fill="#d8c640" stroke="#333"/><circle cx="11" cy="16" r="2" fill="#d8c640" stroke="#333"/>' + ln('M6 11L12 11', R, 2),
  s10: ln('M4 16L16 4', '#111', 1.6) + dot(16, 4),
  s11: ln('M3 17L17 3', '#111', 1.6) + dot(10, 10),
  s12: ln('M4 2C14 2 6 18 18 17', '#333', 1.2) + dot(10, 9),
  s13: ln('M3 15L8 4L12 15L18 9', '#6a3ab0', 1.8) + dot(3, 15) + dot(8, 4) + dot(12, 15) + dot(18, 9),
  s14: ln('M10 2V18M2 16C4 8 16 8 18 16', '#333', 1.2) + dot(10, 9),
  s15: '<circle cx="10" cy="10" r="8" fill="none" stroke="#111" stroke-width="1.5"/>' + dot(10, 10),
  s16: '<circle cx="10" cy="10" r="7" fill="none" stroke="#333"/>' + dot(10, 3) + dot(10, 17) + dot(3, 10) + dot(17, 10),
  s17: ln('M10 2V18M2 10H18', '#111', 1.6) + dot(10, 10),
  s18: ln('M4 18L17 3', '#111', 1.6) + dot(7, 14),
  s19: fl('M3 7C7 2 13 2 17 4C13 8 13 12 14 16C9 14 6 15 3 18C2 14 2 10 3 7Z', '#a9c4ea', '#6486b8') + dot(12, 6),
  s20: ln('M5 3L16 6V18L5 14ZM9 4V16M13 5V17M5 7L16 10M5 11L16 14', '#333') + dot(11, 9),
  s21: '<rect x="2" y="3" width="15" height="14" fill="#eef3fb" stroke="#4d6fb3" stroke-dasharray="2 1"/><circle cx="10" cy="10" r="4" fill="#fff" stroke="#666"/>' + ln('M12 13L16 18', '#666', 1.8) + dot(17, 3) + dot(2, 17),
  s22: fl('M1 4H17V14H1Z', '#d9e4f6', '#7790c0') + fl('M9 11L12 9L18 11V17H12Z', '#efc98e', '#a87c40'),
  s23: ln('M4 13C1 6 9 1 14 5M16 7C19 14 11 19 6 15', '#4c6796', 2) + fl('M12 2L17 6L12 8ZM8 12L3 14L8 18Z', '#4c6796'),
  s24: fl('M1 3H19V17H1Z', '#eef3fc', '#3f63b0') + fl('M1 3H19V6H1Z', '#3f63b0') + fl('M5 8H8V11H5ZM12 8H15V11H12ZM5 12H8V15H5ZM12 12H15V15H12Z', '#e0664a'),
  s25: fl('M2 13L8 4L14 2V11L18 13L11 18Z', '#8b8d90', '#44474a') + fl('M8 13L14 11L18 13L11 17Z', '#c9cbcd', '#44474a'),
  s26: cube('#c0cff6', '#8aa4ea', '#5f7fda', '#3c56a8'),
  s27: fl('M1 4L7 7L1 11Z', '#c8402f') + fl('M1 11L7 8V17Z', '#2f9c42') + fl('M8 9L13 4L19 10L13 16Z', '#b4c6e4', '#53688e'),
  tick: fl('M3 10L6 8L8 12L16 3L18 5L9 18H7Z', '#1fa83c'),
  clock,
  views: fl('M10 1L17 5V13L10 17L3 13V5Z', '#d8f2e2', '#1f8f58') + ln('M3 5L10 9L17 5M10 9V17M6 3V15M3 9L17 9', '#1f8f58', 1.3) + ln('M12 18L19 14', '#e07a2a', 2),
  camera: fl('M2 7L12 3L16 5V15L5 18Z', '#f3d9c9', '#b04a34') + '<circle cx="12" cy="10" r="5" fill="#5c5f80" stroke="#333"/><circle cx="12" cy="10" r="2" fill="#d08080"/>' + ln('M3 16L8 13', '#c03030', 1.6),
  sheet: fl('M6 3H19V14H6Z', '#c9d2ee', '#5d6ba8') + fl('M3 5H16V16H3Z', '#dfe5f6', '#5d6ba8') + fl('M1 8H14V19H1Z', '#fff', '#5d6ba8'),
  folder: fl('M2 5H8L10 7H17V17H2Z', '#f3c23c', '#a87a1c') + fl('M5 10H20L16 18H2Z', '#fbdc72', '#a87a1c'),
  body: fl('M6 12L14 10L20 13V16L11 20L4 16Z', '#4f7fd8', '#274a9c') + fl('M9 5H15V12L9 14Z', '#c3d4f4', '#274a9c') + ln('M10 3H18M17 1V6', '#222', 1.3) + '<circle cx="6" cy="6" r="4.6" fill="#f6dada" stroke="#c8281e" stroke-width="1.8"/>' + ln('M3 9L9 3', '#c8281e', 1.6),
  gear: '<circle cx="10" cy="10" r="6" fill="none" stroke="#333" stroke-width="2"/>' + ln('M10 1V4M10 16V19M1 10H4M16 10H19M4 4L6 6M14 14L16 16M4 16L6 14M14 6L16 4', '#333', 2),
  asmnav: fl('M2 2H8V8H2Z', '#eeb93a', '#96701a') + fl('M7 4H12V9H7Z', '#f5d070', '#96701a') + fl('M12 12H18V17H12Z', '#eeb93a', '#96701a') + ln('M4 11V19M4 14H10M13 9H19', '#222', 1.5),
  constr: fl('M4 2L10 5L16 2V8L10 5L4 8Z', '#1f3fa8') + ln('M10 9V18', '#222') + fl('M1 11H8V18H1Z', '#f2d93c', '#96801a') + fl('M12 11L19 18H12Z', '#c8281e'),
  partnav: fl('M2 4C2 1 11 1 11 4V9C11 12 2 12 2 9Z', '#cf86b8', '#8a3a74') + ln('M4 12V19M4 15H9M13 8H19', '#222', 1.4) + '<circle cx="14" cy="15" r="3.4" fill="#f3d4ea" stroke="#8a3a74"/><circle cx="14" cy="15" r="1.2" fill="#8a3a74"/>',
  reuse: fl('M1 6L5 3V15L1 18Z', '#e09a2a', '#8a5a12') + fl('M6 6L10 3V15L6 18Z', '#3ca64a', '#1b6426') + fl('M11 6L19 2V14L11 18Z', '#3b9be0', '#1f4f94'),
  hd3d: '<circle cx="10" cy="10" r="8" fill="#3763b8"/>' + ln('M10 4V14M6 7H14', '#fff', 1.6),
  web: fl('M3 2H13L17 6V18H3Z', '#eef8fa', '#2a7f9a') + '<circle cx="10" cy="12" r="3.6" fill="#46a84e"/>' + ln('M8 12H12', '#fff'),
  history: clock,
  color: fl('M1 2H8V6H1Z', '#e33') + fl('M1 6H8V10H1Z', '#f3d22c') + fl('M1 10H8V14H1Z', '#3cc84a') + fl('M1 14H8V18H1Z', '#2fb4e0') + ln('M9 7L17 17', '#222', 2.4) + ln('M9 3V13', '#e8b040', 2),
  proc: fl('M2 2H8V8L12 14V16H2Z', '#3f7fd0', '#204f94') + ln('M8 6H19M13 10H17', '#7aa6dc', 2) + ln('M9 5L17 17M16 8L10 14', '#222', 2),
  robot: ln('M5 14L10 10L8 6L13 3L17 5M13 3L12 1', '#444', 2.2) + fl('M2 14H9V18H2Z', '#e0892a') + ln('M8 15L15 18', '#333', 2),
  role: fl('M1 4L5 2V18L1 17Z', '#ddd', '#555') + fl('M6 3H19V17H6Z', '#fff', '#555') + fl('M10 5H16V12H10Z', '#f0b0a0', '#3763b8') + fl('M11 8H15V12H11Z', '#3763b8'),
  up: ln('M10 17V5M5 10L10 4L15 10', '#3ba0e8', 2.6),
  down: ln('M10 3V15M5 10L10 16L15 10', '#2fa34d', 2.6),
  flag: fl('M0 0H20V20H0Z', '#dcdcdc', '#bbb') + ln('M3 5L8 16M17 4L11 17', '#777') + fl('M4 5L8 7L7 11L5 10ZM11 4H14V7H11ZM14 7H17V10H14ZM11 10H14V12H11Z', '#888'),
  nxball: '<circle cx="10" cy="11" r="8" fill="#2fa0b8"/>' + fl('M4 8C8 14 14 12 18 6L17 15C10 20 4 16 4 8Z', '#56b85a') + fl('M4 1L13 3L10 10Z', '#d8281e') + ln('M2 13C8 19 17 13 19 5', '#f0d050', 1.6),
  chev: ln('M2 14L10 6L18 14', '#fff', 1.5),
  qq: '<circle cx="11" cy="9" r="8" fill="#8f9698"/><circle cx="11" cy="5" r="5" fill="#e02a20"/>' + fl('M4 12L16 10L18 17L10 20L3 17Z', '#c9cdd2') + ln('M1 13L6 16M14 19L19 13M8 12V17', '#555', 1.6),
  volume: ln('M1 7H4L9 3V17L4 13H1Z', '#fff', 1.3) + ln('M11 7C13 9 13 11 11 13M14 5C17 8 17 12 14 15', '#fff', 1.3) + ln('M17 3C21 8 21 12 17 17', '#777', 1.3),
};

// 32x32 网格的大图标
const bigIcons = {
  sketch: fl('M3 2L27 6V31L3 26Z', '#f5f7f7', '#444') + ln('M7 7L14 8V15L7 14ZM7 18L12 19V25L7 24ZM16 19L24 20V27L16 26Z', '#333', 1.4) + fl('M23 0L25 6L31 4L27 9L32 13L26 13L24 18L21 13L15 14L19 9L16 4L22 6Z', '#f4e36a', '#c9b23a'),
  profile: ln('M7 4V17C7 26 16 26 16 17V14C16 7 25 7 25 17V20', '#333', 1.5) + dot(7, 18) + dot(16, 18) + dot(25, 18),
  rect: ln('M6 8H26V25H6Z', '#333', 1.5) + dot(6, 8) + dot(26, 25),
  line: ln('M7 25L25 7', '#333', 1.5) + dot(7, 25) + dot(25, 7),
  arc: ln('M7 6C18 6 25 14 25 26', '#333', 1.5) + dot(7, 6) + dot(19, 11) + dot(25, 26),
  circle: '<circle cx="16" cy="16" r="10" fill="none" stroke="#333" stroke-width="1.5"/>',
  plus: ln('M16 7V25M7 16H25', '#333', 1.6),
  plane: fl('M3 1L29 5V31L3 26Z', '#e2e8e7', '#566'),
  extrude: fl('M1 6L8 2L14 5L20 2L27 6V25L20 30L14 26L8 30L1 26Z', '#f4b04a', '#a8682a') + fl('M8 8L14 5L20 8V27L14 22L8 30Z', '#fbd68e', '#a8682a') + ln('M30 24V12', R, 1.6) + fl('M27 14L30 9L33 14Z', R),
  hole: fl('M2 8L12 2L30 5L21 12Z', '#c2d0f6', '#566fc0') + fl('M2 8L21 12V31L2 26Z', '#8faaf0', '#566fc0') + fl('M30 5L21 12V31L30 23Z', '#6584dc', '#566fc0') + '<circle cx="11" cy="19" r="6" fill="#f2a23c" stroke="#a8682a"/>',
  blend: fl('M8 5L17 0L31 4L24 8Z', '#c5d8f6', '#4a62a8') + fl('M1 16C1 9 4 6 8 5L24 8C20 11 19 15 19 20Z', '#f6cf74', '#a8682a') + fl('M1 16L19 20V32L1 27Z', '#dde6fb', '#4a62a8') + fl('M19 20C19 13 24 7 31 4V23L19 32Z', '#6b86e2', '#4a62a8'),
  moveface: fl('M3 9L17 1L31 9L17 16Z', '#c99ae2', '#7a4f9c') + fl('M3 9L17 16V32L3 25Z', '#f6b14a', '#b4702a') + fl('M31 9L17 16V32L31 25Z', '#f0d4f2', '#b08ac0') + ln('M21 13V31M12 22H30', '#333', 3.4) + ln('M21 13V31M12 22H30', '#fff', 1.4) + fl('M21 9L25 14H17ZM21 35L25 30H17ZM8 22L13 18V26ZM34 22L29 18V26Z', '#fff', '#333'),
  surface: fl('M1 13L16 1C22 3 29 6 31 12L17 31C14 22 9 16 1 13Z', '#a9cfc0', '#4d7f70') + ln('M5 10C14 13 19 19 21 26M9 7C18 9 23 15 25 21M13 4C21 6 26 10 29 16M7 15L20 3M12 20L25 6M15 26L30 10', '#4d7f70', 1.2),
  start: fl('M5 8L14 7V15H5ZM15 7L27 5V15H15ZM5 16H14V25L5 24ZM15 16H27V27L15 25Z', '#fff'),
  explorer: fl('M1 4H11L13 7H30V28H1Z', '#f6d774') + fl('M1 4H11L13 7H30V10H1Z', '#e9b93e') + fl('M6 17H26V29H21V22H11V29H6Z', '#3ba4dc'),
  redapp: fl('M0 0H32V32H0Z', '#fb4423') + ln('M11 10V21M16 10V21M21 10V21', '#fff', 1.6) + fl('M9 17H12V20H9ZM15 11H18V14H15ZM20 17H23V20H20Z', '#fff'),
  mail: fl('M0 12L16 3L32 12V28H0Z', '#fff') + fl('M2 12H30L17 18L25 25L12 18Z', '#121806'),
  ie: '<circle cx="16" cy="16" r="14" fill="#4faf3c"/><circle cx="16" cy="16" r="14" fill="none" stroke="#e6f5e0" stroke-width="1.4"/>' + ln('M9 17H23C23 8 9 8 9 17C9 25 20 25 23 21', '#fff', 3.6) + ln('M5 28C1 20 15 4 28 2', '#2f8a2a', 2),
  bird: '<rect width="32" height="32" rx="4" fill="#eef2fd"/>' + fl('M3 7L14 12C15 8 17 6 19 8C21 5 25 4 29 3C27 7 27 9 29 12L25 14C24 20 18 23 15 29C13 28 14 25 15 22C11 21 6 16 6 12Z', '#6c8df0'),
  redy: '<circle cx="16" cy="16" r="16" fill="#c4221c"/><circle cx="16" cy="16" r="12" fill="#e8382d"/>' + fl('M2 9C7 7 12 9 16 12C20 9 25 7 30 9C24 11 20 13 18 16V29H14V16C12 13 8 11 2 9Z', '#3a1512'),
  player: fl('M2 4C8 1 10 3 10 6V28C8 31 2 30 1 26Z', '#f08a24') + fl('M8 2C10 0 14 1 30 13C33 16 32 18 28 21L12 30C8 32 7 28 7 24Z', '#2f8fe0') + fl('M5 7C5 4 10 4 24 14C26 16 24 18 20 21L10 28C6 29 5 27 5 24Z', '#6cc12c') + fl('M10 10L20 16L10 22Z', '#fff'),
  acad: fl('M0 0H32V32H0Z', '#e87464') + fl('M0 0H18V14L0 26Z', '#f2a79a') + fl('M16 2L26 23L16 18L6 23Z', '#7a1410') + fl('M16 2L19 18L12 17Z', '#b52a20') + '<text x="16" y="30" font-size="7" font-weight="700" fill="#fff" text-anchor="middle">M</text>',
  nx: '<circle cx="16" cy="17" r="12" fill="#2a9fd8"/>' + fl('M6 12C10 6 18 8 19 14C20 21 12 25 8 25C4 20 4 15 6 12Z', '#6cc6ec') + fl('M3 1L18 1L15 16Z', '#d0213c') + ln('M1 29C16 30 36 14 30 7C28 5 25 6 23 7', '#f0a83a', 2.6) + fl('M0 29L7 24L7 31Z', '#f0a83a'),
  ppt: fl('M1 6C1 2 4 1 8 1H26V25H1Z', '#f2bda4') + fl('M5 8L31 7L29 29L5 27Z', '#fff', '#e8a88a') + fl('M8 11H28V25H8Z', '#d8572a') + ln('M10 14H16M10 18H16M10 22H16', '#fff', 1.8) + '<circle cx="22" cy="18" r="4.4" fill="#fff"/>' + fl('M22 18V12L28 18Z', '#d8572a'),
  note: fl('M2 4H27V23H16L11 28V23H2Z', '#fff') + ln('M6 10H23M6 14H23M6 18H18', '#222', 1.6),
};

const Icon = (props) => {
  const size = props.big ? 32 : 20;
  return h('svg', {
    class: props.big ? 'icon big-icon' : 'icon',
    viewBox: `0 0 ${size} ${size}`,
    innerHTML: props.big ? bigIcons[props.name] : icons[props.name],
  });
};
Icon.props = { name: String, big: Boolean };

const outline = 'M213 157L1378 84C1450 90 1492 160 1500 235L1512 350L1473 825C1462 890 1420 915 1374 918L209 992C120 985 66 910 63 790L105 310C112 220 150 165 213 157Z';

const tabs = ['主页', '曲线', '曲面', '分析', '视图', '工具', '渲染', '应用模块', '燕秀UG模具6.32', '燕秀UG工具'];
const gallery = ['profile', 'rect', 'line', 'arc', 'circle', 'plus'];

const gcGroups = [
  { label: '标准化工具...', cls: 'g-std', rows: [['std1', 'stack', 'stack2', '|', 'tag'], ['chk1', 'chk2', 'chk3', '|', 'edit']] },
  { label: '齿...', cls: 'g-gear', rows: [['gear1', 'gear2'], ['finger']] },
  { label: '弹...', cls: 'g-spring', rows: [['spring1', 'spring2'], ['coil', '|', 'snip']] },
  { label: '加...', cls: 'g-gear', rows: [['vcheck', 'vcopy'], ['grid', 'csys']] },
  { label: '建模工具 ...', cls: 'g-model', rows: [['tri', 'table', 'fold1', 'fold2'], ['note2', 'brush', '|', 'find']] },
  { label: "'.", cls: 'g-tiny', rows: [['cubes'], ['cubes']] },
  {
    label: '尺寸快速格式化工具 - GC工具箱',
    cls: 'g-dim',
    rows: [['dimall', '|', 'd0', 'd1', 'd2', 'd3', 'd4', 'd5', 'd6', 'd7', 'd8', 'd9', 'd10'], ['rad', 'rad2', '|', 'dia1', 'dia2', 'ret']],
  },
];

const barIcons = [
  's1', 's2', 's3', 'v', 's4', 's5', 's6', 'v', ' ', 's7', 's8', ' ', 's9*', 's10*', ' ', 's11*', 's12', ' ', 's13*', 's14', ' ',
  's15*', 's16', ' ', 's17*', 's18*', ' ', 's19', 's20', '|', 's21', 's22', 's23', ' ', 's24', 'v', 's25', 'v', ' ', 's26', 'v', 's27', 'v', '|',
];

const nodes = [
  { text: '历史记录模式', icons: ['clock'], first: true },
  { text: '模型视图', icons: ['views'], box: '+' },
  { text: '摄像机', icons: ['tick', 'camera'], box: '+' },
  { text: '图纸', icons: ['clock', 'sheet'], box: '+' },
  { text: '组', icons: ['folder'], box: '+' },
  { text: '模型历史记录', icons: ['folder'], box: '-', last: true },
  { text: '基准坐标系 (0)', icons: ['csys'], child: true, dim: true },
  ...[1, 2, 3, 4, 5].map((n) => ({ text: `体 (${n})`, icons: ['body'], child: true, dim: true })),
  { text: '体 (6)', icons: ['body'], child: true, bold: true, last: true },
];
const treeRows = [...nodes, ...Array.from({ length: 14 }, () => ({}))];

const branchPath = (row) => {
  if (row.first) return 'M6.5 12V24M6 12.5H16';
  if (row.last) return 'M6.5 0V12M6 12.5H16';
  return 'M6.5 0V24M6 12.5H16';
};

const sections = ['相依性', '细节', '预览'];
const resources = ['asmnav', 'constr', 'partnav', 'reuse', 'hd3d', 'web', 'history', 'color', 'proc', 'robot', 'role'];

const tasks = [
  { icon: 'start' },
  { icon: 'explorer', state: 'open' },
  { icon: 'redapp' },
  { icon: 'mail' },
  { icon: 'ie', state: 'open' },
  { icon: 'bird' },
  { icon: 'redy' },
  { icon: 'player' },
  { icon: 'acad', state: 'open' },
  { icon: 'nx', state: 'current' },
  { icon: 'ppt', state: 'open' },
];
</script>

<style>
body {
  margin: 0;
}
</style>

<style scoped>
.app {
  min-height: 100vh;
  display: flex;
  flex-direction: column;
  background: #fff;
  color: #222;
  font-family: "Noto Sans", "Noto Sans CJK SC", sans-serif;
  font-size: 14px;
  overflow: hidden;
}

.app * {
  box-sizing: border-box;
}

button {
  display: flex;
  align-items: center;
  padding: 0;
  border: 0;
  background: none;
  color: inherit;
  font: inherit;
  white-space: nowrap;
}

.icon {
  display: block;
  width: 16px;
  height: 16px;
  flex: none;
  overflow: visible;
}

.big-icon {
  width: 30px;
  height: 30px;
}

.caret {
  flex: none;
  width: 0;
  height: 0;
  border: 3px solid transparent;
  border-top: 4px solid #222;
  border-bottom-width: 0;
}

.caret.up {
  border-top-width: 0;
  border-bottom: 4px solid #aaa;
}

.caret.lined {
  position: relative;
}

.caret.lined::before {
  content: "";
  position: absolute;
  left: -3px;
  top: -7px;
  width: 6px;
  height: 1px;
  background: #222;
}

/* 标题栏 */
.title-bar {
  position: relative;
  display: flex;
  align-items: center;
  height: 30px;
}

.top-shade {
  position: absolute;
  left: 272px;
  top: 0;
  width: 345px;
  height: 4px;
  background: linear-gradient(#bbb, #eee);
}

.quick {
  display: flex;
  align-items: center;
  padding-left: 4px;
}

.nx-logo {
  width: 42px;
  font: bold 25px/30px "Liberation Sans", sans-serif;
  color: #8698a2;
}

.q-sep {
  width: 1px;
  height: 22px;
  background: #ddd;
}

.q-sep.gap {
  margin-left: 3px;
}

.q-btn {
  width: 30px;
  height: 24px;
  justify-content: center;
}

.q-btn.tight {
  width: 23px;
}

.q-win {
  gap: 4px;
  padding-left: 6px;
}

.q-win ~ .caret {
  margin-left: 6px;
}

.title-text {
  flex: 1;
  font-size: 15px;
  line-height: 26px;
  padding-bottom: 2px;
  text-align: center;
  white-space: nowrap;
}

.title-right {
  display: flex;
  align-items: center;
  padding-right: 3px;
  color: #444;
}

.siemens {
  margin-right: 20px;
  font: bold 16px/30px "Noto Sans", sans-serif;
  color: #0d8d91;
}

.win-btn {
  width: 29px;
  height: 24px;
  justify-content: center;
}

.title-right .icon,
.tb-btn .icon {
  width: 17px;
  height: 17px;
}

/* 选项卡 */
.tab-bar {
  display: flex;
  align-items: stretch;
  height: 32px;
  background: #c7d5d6;
  font-size: 16px;
}

.file-tab {
  width: 91px;
  margin-right: 2px;
  padding-bottom: 2px;
  justify-content: center;
  background: #518180;
  color: #f2f8f8;
}

.tab {
  padding: 0 13px 1px;
}

.tab.active {
  background: #fff;
  border-top: 1px solid #6f8f90;
  color: #24809f;
}

.tab-right {
  display: flex;
  align-items: center;
  margin-left: auto;
  padding-right: 4px;
  color: #111;
}

.search {
  display: flex;
  align-items: center;
  width: 156px;
  height: 24px;
  margin-right: 6px;
  padding-right: 3px;
  background: #fff;
  border: 1px solid #a4afb0;
}

.search input {
  flex: 1;
  min-width: 0;
  padding: 0 1px;
  border: 0;
  outline: 0;
  background: none;
  font: inherit;
  font-size: 14px;
}

.search input::placeholder {
  color: #aaa;
}

.tb-btn {
  width: 26px;
  justify-content: center;
}

/* 功能区 */
.ribbon {
  display: flex;
  height: 106px;
  border-bottom: 1px solid #d8d8d8;
}

.group {
  display: flex;
  flex-direction: column;
  flex: none;
  margin: 4px 0 1px;
  border-right: 1px solid #dcdcdc;
}

.g-sketch { width: 200px; }
.g-feature { width: 410px; padding-left: 10px; }
.g-sync { width: 194px; padding-left: 9px; }
.g-surface { width: 43px; }
.g-std { width: 104px; }
.g-gear { width: 52px; }
.g-spring { width: 58px; }
.g-model { width: 99px; }
.g-tiny { width: 28px; }
.g-dim { width: 288px; }

.group-body {
  display: flex;
  height: 80px;
}

.group-foot {
  display: flex;
  align-items: center;
  height: 20px;
  line-height: 20px;
  color: #2a7f9e;
}

.g-feature .group-foot {
  margin-left: -10px;
}

.g-sync .group-foot {
  margin-left: -9px;
}

.group-foot span {
  flex: 1;
  text-align: center;
  white-space: nowrap;
}

.group-foot .caret {
  margin: 0 8px;
}

.big {
  flex-direction: column;
  width: 40px;
  line-height: 16px;
  padding-top: 2px;
}

.big > span:not(.more-box) {
  margin-top: 8px;
}

.big .caret {
  margin-top: 6px;
}

.w-sketch { width: 58px; }
.w-plane { width: 62px; }
.w-blend { width: 50px; }

.gallery {
  display: grid;
  grid-template-columns: repeat(3, 1fr);
  width: 116px;
  height: 78px;
  margin-top: 1px;
  border: 1px solid #d4d4d4;
}

.gallery button {
  justify-content: center;
}

.gallery-nav {
  display: flex;
  flex-direction: column;
  justify-content: space-between;
  padding: 12px 0 12px 8px;
}

.list {
  display: flex;
  flex-direction: column;
  margin-top: -3px;
  padding-left: 5px;
}

.list button {
  height: 26px;
  gap: 4px;
}

.list .caret {
  margin-left: 5px;
}

.w-list1 { width: 88px; padding-left: 7px; }
.w-list2 { width: 76px; }
.w-list3 { width: 91px; }

.more {
  padding-top: 0;
}

.more-box {
  display: flex;
  align-items: center;
  justify-content: center;
  width: 37px;
  height: 35px;
  border: 1px solid #f0f0f0;
}

.more > span:not(.more-box) {
  margin-top: 5px;
}

.gc {
  flex-direction: column;
  padding: 3px 0 0 5px;
}

.g-tiny .gc {
  padding-left: 3px;
}

.gc-row {
  display: flex;
  align-items: center;
  height: 31px;
}

.gc-row button {
  width: 23px;
  justify-content: center;
}

.gc-row .icon,
.bar-icons .icon,
.resource-bar .icon {
  width: 17px;
  height: 17px;
}

.gc-sep {
  width: 1px;
  height: 19px;
  margin: 0 3px 0 2px;
  background: #d4d4d4;
}

.ribbon-end {
  flex: 1;
  display: flex;
  align-items: flex-end;
  justify-content: flex-end;
  padding: 0 6px 8px 0;
}

/* 选择条 */
.select-bar {
  display: flex;
  align-items: center;
  height: 36px;
  border-bottom: 1px solid #8a8a8a;
}

.menu-btn {
  gap: 5px;
  padding-left: 10px;
}

.bar-sep {
  width: 1px;
  height: 27px;
  margin: 0 12px 0 6px;
  background: #ddd;
}

.bar-sep.wide {
  margin: 0 8px 0 7px;
}

.combo {
  height: 24px;
  padding: 0 2px;
  border: 1px solid #999;
  border-radius: 0;
  color: #222;
  font: inherit;
  appearance: none;
  background: linear-gradient(#222, #222) right 7px top 9px / 7px 1px no-repeat,
    linear-gradient(#222, #222) right 8px top 10px / 5px 1px no-repeat,
    linear-gradient(#222, #222) right 9px top 11px / 3px 1px no-repeat,
    linear-gradient(#222, #222) right 10px top 12px / 1px 1px no-repeat,
    #fff;
}

.c1 {
  width: 167px;
  margin-right: 8px;
}

.c2 {
  width: 176px;
}

.bar-icons {
  display: flex;
  align-items: center;
  margin-left: 7px;
}

.bar-icons button {
  width: 24px;
  height: 23px;
  justify-content: center;
  border: 1px solid transparent;
}

.bar-icons button.on {
  background: #c7d8d8;
  border-color: #a3bcbc;
}

.bar-icons .caret {
  margin: 0 3px;
}

.bar-gap {
  width: 2px;
}

.bar-end {
  margin: 12px 6px 0 auto;
}

/* 工作区 */
.work {
  position: relative;
  flex: 1;
  display: flex;
}

.viewport {
  position: relative;
  flex: 1;
  background: linear-gradient(#fff 0%, #ecfdff 35%, #d6fdff 80%, #d3fdff 100%);
  border-right: 1px solid #8a9696;
}

.scene {
  position: absolute;
  left: 0;
  top: 0;
  width: 100%;
  height: 100%;
  font-size: 11px;
}

.edges path {
  fill: none;
  stroke: #3d3214;
  stroke-width: 1;
  vector-effect: non-scaling-stroke;
  opacity: 0.85;
}

.watermark {
  position: absolute;
  left: 26px;
  bottom: 51px;
  color: #d8100f;
  font-size: 38px;
  line-height: 48px;
  white-space: nowrap;
}

.colon {
  font-family: "Noto Sans CJK TC", sans-serif;
}

.navigator {
  width: 436px;
  padding: 0 4px 6px 9px;
}

.nav-title {
  display: flex;
  align-items: center;
  gap: 11px;
  height: 31px;
  margin: 0;
  padding-left: 4px;
  font-size: 15px;
  font-weight: 400;
}

.nav-box {
  width: 14px;
  height: 13px;
  border: 1px solid #333;
}

.tree-wrap {
  border: 1px solid #d2d2d2;
  border-bottom: 0;
}

.tree {
  width: 100%;
  table-layout: fixed;
  border-spacing: 0;
  font-size: 15px;
}

.col-name { width: 201px; }
.col-mid { width: 100px; }

.tree th,
.tree td {
  height: 24px;
  padding: 0;
  border-right: 1px solid #e6e6e6;
  border-bottom: 1px solid #ebebeb;
  line-height: 23px;
  text-align: left;
}

.tree th {
  height: 25px;
  padding-left: 7px;
  background: #f0f0f0;
  border-color: #d6d6d6;
  font-weight: 400;
}

.tree th:last-child,
.tree td:last-child {
  border-right: 0;
}

.tree tbody tr:nth-child(even) {
  background: #fafafa;
}

.caret.up.sort {
  display: inline-block;
  margin: 0 0 3px 18px;
  border-width: 0 5px 5px;
  border-bottom-color: #222;
}

.node {
  display: flex;
  align-items: center;
  height: 23px;
  padding-left: 4px;
  white-space: nowrap;
}

.node.child {
  padding-left: 23px;
}

.node.dim {
  color: #a2a2a2;
}

.node.bold {
  font-weight: 700;
}

.node span {
  margin-left: 3px;
}

.node input {
  appearance: none;
  width: 13px;
  height: 13px;
  margin: 0 2px 0 1px;
  border: 1px solid #111;
  background: #fff;
}

.node input:checked::before {
  content: "";
  display: block;
  width: 5px;
  height: 8px;
  margin: 0 0 0 3px;
  border: solid #1fa83c;
  border-width: 0 3px 3px 0;
  transform: rotate(40deg);
}

.tick {
  width: 15px;
  height: 15px;
  margin-left: 5px;
}

.splitter {
  height: 6px;
  margin: 2px -1px 0;
  background: #d8d8d8;
  border: 1px solid #b0b0b0;
}

.section-bar {
  width: 100%;
  height: 28px;
  justify-content: space-between;
  padding: 0 5px 0 7px;
  border-bottom: 2px solid #d2d2d2;
  color: #2a7f9e;
  font-size: 18px;
}

.resource-bar {
  display: flex;
  flex-direction: column;
  width: 26px;
  background: #dedede;
}

.resource-bar button {
  height: 34px;
}

.resource-bar .gear {
  height: 24px;
  margin-bottom: 18px;
  padding-left: 8px;
}

.resource-bar .gear .icon {
  width: 14px;
  height: 14px;
}

.resource-bar .active {
  width: 24px;
  background: #fff;
  border: 1px solid #bbb;
  border-left: 0;
}

.hd3d,
.web,
.history {
  margin-top: 12px;
}

.speed {
  position: absolute;
  right: 2px;
  top: 177px;
  display: flex;
  align-items: center;
}

.speed-pill {
  width: 112px;
  height: 52px;
  margin-right: -38px;
  padding: 1px 42px 1px 12px;
  border-radius: 26px;
  background: #343a46;
  box-shadow: 0 0 5px rgba(60, 50, 80, 0.6);
  color: #e6e8ec;
}

.speed-pill div {
  display: flex;
  align-items: center;
  height: 25px;
}

.speed-pill .icon {
  width: 12px;
  height: 12px;
  margin-right: auto;
}

.speed-pill b {
  font-size: 15px;
  font-weight: 600;
}

.speed-pill small {
  color: #9aa0aa;
  font-size: 12px;
}

.speed-ball {
  position: relative;
  display: flex;
  align-items: center;
  justify-content: center;
  width: 74px;
  height: 74px;
  border-radius: 50%;
  background: #525a67;
  box-shadow: 0 0 4px rgba(0, 0, 0, 0.6);
}

.speed-ball svg {
  position: absolute;
  inset: 0;
}

.pct {
  color: #e8eaee;
  font: 300 30px/34px "Open Sans", "Noto Sans", sans-serif;
}

.pct small {
  font-size: 13px;
  font-weight: 400;
}

/* 状态栏 */
.status {
  display: flex;
  align-items: center;
  justify-content: space-between;
  height: 23px;
  padding: 0 27px 3px 3px;
  border-top: 1px solid #9aa8b0;
  line-height: 19px;
  font-weight: 700;
}

.status-icons {
  display: flex;
  gap: 4px;
}

.status-icons .icon:last-child {
  margin-left: 8px;
}

/* 任务栏 */
.taskbar {
  display: flex;
  height: 50px;
  background: linear-gradient(90deg, #101a08 0%, #162008 14%, #23282a 22%, #2b2728 36%, #262626 45%, #1c2412 52%, #1a2010 62%, #1e2416 74%, #0c1012 80%, #181c18 88%, #232a12 95%, #2a2c2a 100%);
  color: #fff;
}

.task {
  width: 62px;
  justify-content: center;
  border-bottom: 3px solid transparent;
  padding-top: 2px;
}

.task.open {
  background: linear-gradient(#76aee0, #76aee0) center bottom / 51px 3px no-repeat border-box;
}

.task.current {
  background: #575757;
  border-bottom-color: #76aee0;
}

.tray {
  display: flex;
  align-items: center;
  margin-left: auto;
}

.tray .icon {
  width: 20px;
  height: 20px;
  margin-right: 10px;
}

.ime {
  width: 20px;
  font-size: 18px;
}

.ime-m {
  width: 18px;
  height: 18px;
  margin: 0 28px 0 16px;
  background: #fff;
  color: #111;
  font-size: 18px;
  line-height: 18px;
  text-align: center;
}

.clock {
  display: flex;
  flex-direction: column;
  align-items: center;
  width: 66px;
  font-size: 15px;
  line-height: 23px;
}

.notice {
  position: relative;
  margin: 0 15px 0 27px;
}

.tray .notice .icon {
  width: 25px;
  height: 25px;
  margin: 0 6px 0 0;
}

.notice span {
  position: absolute;
  left: 11px;
  top: 8px;
  width: 20px;
  height: 20px;
  border: 1px solid #888;
  border-radius: 50%;
  background: #2c2e2c;
  font-size: 13px;
  font-weight: 700;
  line-height: 18px;
  text-align: center;
}

.desk {
  width: 6px;
  height: 50px;
  border-left: 1px solid #777;
}
</style>
